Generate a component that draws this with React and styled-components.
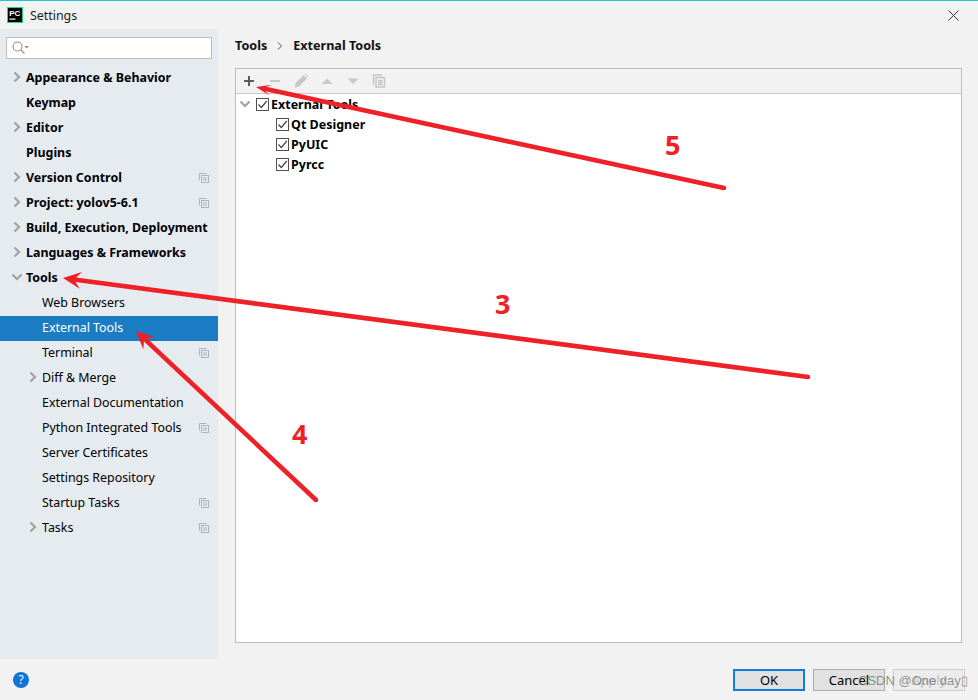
import styled, { createGlobalStyle } from "styled-components"

const GlobalStyle = createGlobalStyle`
    html, body {
        margin: 0;
        padding: 0;
        background: #f2f2f2;
    }
`

const Window = styled.div`
    position: relative;
    width: 978px;
    height: 700px;
    overflow: hidden;
    box-sizing: border-box;
    display: flex;
    flex-direction: column;
    background: #f2f2f2;
    border-top: 1px solid #1fc4c9;
    font-family: "Noto Sans", "Open Sans", sans-serif;
    font-size: 13px;
    color: #000;
`

const TitleBar = styled.div`
    height: 28px;
    flex: none;
    display: flex;
    align-items: center;
    padding: 0 19px 0 7px;
    gap: 7px;
`

const TitleText = styled.span`
    flex: 1;
    font-size: 12.4px;
    color: #1c1c1c;
`

const Main = styled.div`
    flex: 1;
    display: flex;
    min-height: 0;
`

const Sidebar = styled.nav`
    width: 218px;
    flex: none;
    background: #e6ebf0;
    padding-top: 8px;
    box-sizing: border-box;
`

const SearchBox = styled.div`
    height: 22px;
    margin: 0 6px 7px;
    box-sizing: border-box;
    background: #fff;
    border: 1px solid #bdbdbd;
    display: flex;
    align-items: center;
    padding-left: 5px;
`

const Row = styled.div`
    height: 25px;
    display: flex;
    align-items: center;
    box-sizing: border-box;
    padding: 0 9px 2px ${(p) => (p.$child ? 42 : 26)}px;
    position: relative;
    background: ${(p) => (p.$selected ? "#1a7dc4" : "transparent")};
    color: ${(p) => (p.$selected ? "#fff" : "#000")};
    font-weight: ${(p) => (p.$child ? 400 : 700)};
    font-size: ${(p) => (p.$child ? "12.4px" : "12.45px")};
    white-space: nowrap;
`

const RowLabel = styled.span`
    flex: 1;
`

const ArrowSlot = styled.span`
    position: absolute;
    left: ${(p) => (p.$child ? 27 : 11)}px;
    top: 5px;
    width: 12px;
    height: 12px;
    display: flex;
`

const ProjectMark = styled.span`
    display: flex;
    margin-top: 1px;
`

const Content = styled.section`
    flex: 1;
    min-width: 0;
    display: flex;
    flex-direction: column;
    padding: 0 16px 16px 17px;
`

const Breadcrumb = styled.div`
    height: 39px;
    flex: none;
    box-sizing: border-box;
    padding-bottom: 6px;
    display: flex;
    align-items: center;
    gap: 10px;
    font-weight: 700;
    font-size: 12.6px;
    color: #111;
`

const Panel = styled.div`
    flex: 1;
    display: flex;
    flex-direction: column;
    border: 1px solid #bcbcbc;
    background: #fff;
`

const Toolbar = styled.div`
    height: 25px;
    flex: none;
    box-sizing: border-box;
    background: #f2f2f2;
    border-bottom: 1px solid #c9c9c9;
    display: flex;
    align-items: center;
    padding-left: 5px;
    gap: 10px;
`

const ToolIcon = styled.span`
    width: 16px;
    height: 16px;
    display: flex;
`

const TreeRow = styled.div`
    height: 20px;
    display: flex;
    align-items: center;
    gap: 2px;
    padding-left: ${(p) => (p.$root ? 3 : 40)}px;
    font-weight: 700;
    font-size: 12.5px;
`

const TreeToggle = styled.span`
    display: flex;
    margin-right: 3px;
`

const Check = styled.span`
    width: 13px;
    height: 13px;
    box-sizing: border-box;
    border: 1px solid #505050;
    background: #fff;
    display: flex;
    align-items: center;
    justify-content: center;
`

const Footer = styled.footer`
    height: 41px;
    flex: none;
    display: flex;
    align-items: center;
    padding: 0 13px 0 13px;
    gap: 8px;
`

const Help = styled.span`
    width: 16px;
    height: 16px;
    border-radius: 50%;
    background: #0f74d6;
    color: #fff;
    font-size: 12px;
    line-height: 16px;
    text-align: center;
    margin-right: auto;
`

const DialogButton = styled.button`
    width: 72px;
    height: 22px;
    box-sizing: border-box;
    padding: 0;
    font: inherit;
    font-size: 13px;
    line-height: 16px;
    background: #e1e1e1;
    color: ${(p) => (p.disabled ? "#c0c0c0" : "#000")};
    border: ${(p) => (p.$primary ? "2px solid #0f7fdc" : p.disabled ? "1px solid #cfcfcf" : "1px solid #adadad")};
    ${(p) => p.disabled && "background: #ececec;"}
`

const Annotations = styled.svg`
    position: absolute;
    left: 0;
    top: -1px;
    pointer-events: none;
`

const StepNumber = styled.span`
    position: absolute;
    left: ${(p) => p.$x}px;
    top: ${(p) => p.$y}px;
    color: #ee2028;
    font-weight: 700;
    font-size: 27px;
    line-height: 30px;
`

const Watermark = styled.span`
    position: absolute;
    left: 858px;
    top: 671px;
    font-family: "Liberation Sans", Arial, sans-serif;
    font-size: 13px;
    line-height: 18px;
    color: rgba(110, 110, 110, 0.75);
    white-space: nowrap;
`

const Chevron = ({ open }) => (
    <svg width="12" height="12" viewBox="0 0 12 12" fill="none" stroke="#a2a2a2" strokeWidth="2.2">
        <path d={open ? "M1.5 3.5 L6 8 L10.5 3.5" : "M3.5 1.5 L8 6 L3.5 10.5"} />
    </svg>
)

const ProjectIcon = () => (
    <svg width="10" height="10" viewBox="0 0 10 10" fill="none" stroke="#adb5ba" strokeWidth="1">
        <path d="M7.5 0.5 H0.5 V7.5" />
        <rect x="2.5" y="2.5" width="7" height="7" />
        <path d="M4 5 H8 M4 7 H8" />
    </svg>
)

const SearchIcon = () => (
    <svg width="18" height="14" viewBox="0 0 18 14" fill="none" stroke="#8f8f8f" strokeWidth="1.1">
        <circle cx="5.5" cy="5.5" r="4.5" />
        <path d="M9 9 L12.5 12.5" />
        <path d="M12.5 5 H17 L14.75 7.5 Z" fill="#8f8f8f" stroke="none" />
    </svg>
)

const PcLogo = () => (
    <svg width="16" height="16" viewBox="0 0 16 16">
        <rect width="16" height="16" fill="#21d789" />
        <rect x="1" y="1" width="14" height="14" fill="#000" />
        <text x="2.2" y="9" fontSize="8" fontWeight="700" fill="#fff" fontFamily="Liberation Sans, sans-serif">PC</text>
        <rect x="2.5" y="11.5" width="6" height="1.2" fill="#fff" />
    </svg>
)

const CloseIcon = () => (
    <svg width="11" height="11" viewBox="0 0 11 11" stroke="#333" strokeWidth="1">
        <path d="M0.5 0.5 L10.5 10.5 M10.5 0.5 L0.5 10.5" />
    </svg>
)

const CheckMark = () => (
    <svg width="11" height="11" viewBox="0 0 11 11" fill="none" stroke="#444" strokeWidth="1.2">
        <path d="M1.5 5.5 L4.3 8.5 L9.8 2" />
    </svg>
)

const Plus = () => (
    <svg width="16" height="16" viewBox="0 0 16 16" stroke="#5c5c5c" strokeWidth="2">
        <path d="M8 3 V13 M3 8 H13" />
    </svg>
)

const Minus = () => (
    <svg width="16" height="16" viewBox="0 0 16 16" stroke="#c8c8c8" strokeWidth="2">
        <path d="M3 8 H13" />
    </svg>
)

const Pencil = () => (
    <svg width="16" height="16" viewBox="0 0 16 16" fill="#c8c8c8">
        <path d="M1.5 14.5 L2.5 10 L10.5 2 L14 5.5 L6 13.5 Z" />
        <path d="M11.5 1 L12.5 0.5 L15.5 3.5 L15 4.5 Z" />
    </svg>
)

const Triangle = ({ up }) => (
    <svg width="16" height="16" viewBox="0 0 16 16" fill="#c8c8c8">
        <path d={up ? "M2.5 11 L8 5.5 L13.5 11 Z" : "M2.5 5.5 H13.5 L8 11 Z"} />
    </svg>
)

const CopyIcon = () => (
    <svg width="16" height="16" viewBox="0 0 16 16" fill="none" stroke="#c4c4c4" strokeWidth="1.4">
        <path d="M11 2 H2.5 V11.5" />
        <rect x="5" y="4.5" width="8.5" height="9.5" />
        <path d="M7 7.5 H11.5 M7 9.5 H11.5 M7 11.5 H11.5" />
    </svg>
)

const Arrow = ({ x1, y1, x2, y2, headLength = 18, headWidth = 8.5 }) => {
    // shaft stops short of the tip, the head is a notched barb shape
    const dx = x2 - x1
    const dy = y2 - y1
    const len = Math.hypot(dx, dy)
    const ux = dx / len
    const uy = dy / len
    const at = (back, side) => `${x2 - ux * back - uy * side},${y2 - uy * back + ux * side}`
    const notch = headLength - 5
    return (
        <g fill="#ee2028" stroke="none">
            <polygon
                points={`${at(0, 0)} ${at(headLength, headWidth)} ${at(notch, 2.3)} ${at(len, 2.3)} ${at(len, -2.3)} ${at(notch, -2.3)} ${at(headLength, -headWidth)}`}
            />
            <circle cx={x1} cy={y1} r="2.3" />
        </g>
    )
}

const items = [
    { label: "Appearance & Behavior", arrow: true },
    { label: "Keymap" },
    { label: "Editor", arrow: true },
    { label: "Plugins" },
    { label: "Version Control", arrow: true, project: true },
    { label: "Project: yolov5-6.1", arrow: true, project: true },
    { label: "Build, Execution, Deployment", arrow: true },
    { label: "Languages & Frameworks", arrow: true },
    { label: "Tools", arrow: true, open: true },
    { label: "Web Browsers", child: true },
    { label: "External Tools", child: true, selected: true },
    { label: "Terminal", child: true, project: true },
    { label: "Diff & Merge", child: true, arrow: true },
    { label: "External Documentation", child: true },
    { label: "Python Integrated Tools", child: true, project: true },
    { label: "Server Certificates", child: true },
    { label: "Settings Repository", child: true },
    { label: "Startup Tasks", child: true, project: true },
    { label: "Tasks", child: true, arrow: true, project: true },
]

const tools = ["Qt Designer", "PyUIC", "Pyrcc"]

export default function App() {
    return (
        <Window>
            <GlobalStyle />
            <TitleBar>
                <PcLogo />
                <TitleText>Settings</TitleText>
                <CloseIcon />
            </TitleBar>
            <Main>
                <Sidebar>
                    <SearchBox>
                        <SearchIcon />
                    </SearchBox>
                    {items.map((item) => (
                        <Row key={item.label} $child={item.child} $selected={item.selected}>
                            {item.arrow && (
                                <ArrowSlot $child={item.child}>
                                    <Chevron open={item.open} />
                                </ArrowSlot>
                            )}
                            <RowLabel>{item.label}</RowLabel>
                            {item.project && (
                                <ProjectMark>
                                    <ProjectIcon />
                                </ProjectMark>
                            )}
                        </Row>
                    ))}
                </Sidebar>
                <Content>
                    <Breadcrumb>
                        <span>Tools</span>
                        <svg width="6" height="8" viewBox="0 0 6 8" fill="none" stroke="#555" strokeWidth="1">
                            <path d="M1 0.5 L4.5 4 L1 7.5" />
                        </svg>
                        <span>External Tools</span>
                    </Breadcrumb>
                    <Panel>
                        <Toolbar>
                            <ToolIcon><Plus /></ToolIcon>
                            <ToolIcon><Minus /></ToolIcon>
                            <ToolIcon><Pencil /></ToolIcon>
                            <ToolIcon><Triangle up /></ToolIcon>
                            <ToolIcon><Triangle /></ToolIcon>
                            <ToolIcon><CopyIcon /></ToolIcon>
                        </Toolbar>
                        <div>
                            <TreeRow $root>
                                <TreeToggle><Chevron open /></TreeToggle>
                                <Check><CheckMark /></Check>
                                <span>External Tools</span>
                            </TreeRow>
                            {tools.map((name) => (
                                <TreeRow key={name}>
                                    <Check><CheckMark /></Check>
                                    <span>{name}</span>
                                </TreeRow>
                            ))}
                        </div>
                    </Panel>
                </Content>
            </Main>
            <Footer>
                <Help>?</Help>
                <DialogButton $primary>OK</DialogButton>
                <DialogButton>Cancel</DialogButton>
                <DialogButton disabled>Apply</DialogButton>
            </Footer>
            <Annotations width="978" height="700">
                <Arrow x1={724} y1={188} x2={256} y2={87} headLength={15} headWidth={5.5} />
                <Arrow x1={808} y1={377} x2={63} y2={278} />
                <Arrow x1={316} y1={500} x2={136} y2={331} />
            </Annotations>
            <StepNumber $x={665} $y={129}>5</StepNumber>
            <StepNumber $x={495} $y={288}>3</StepNumber>
            <StepNumber $x={292} $y={418}>4</StepNumber>
            <Watermark>CSDN @One day▯</Watermark>
        </Window>
    )
}
